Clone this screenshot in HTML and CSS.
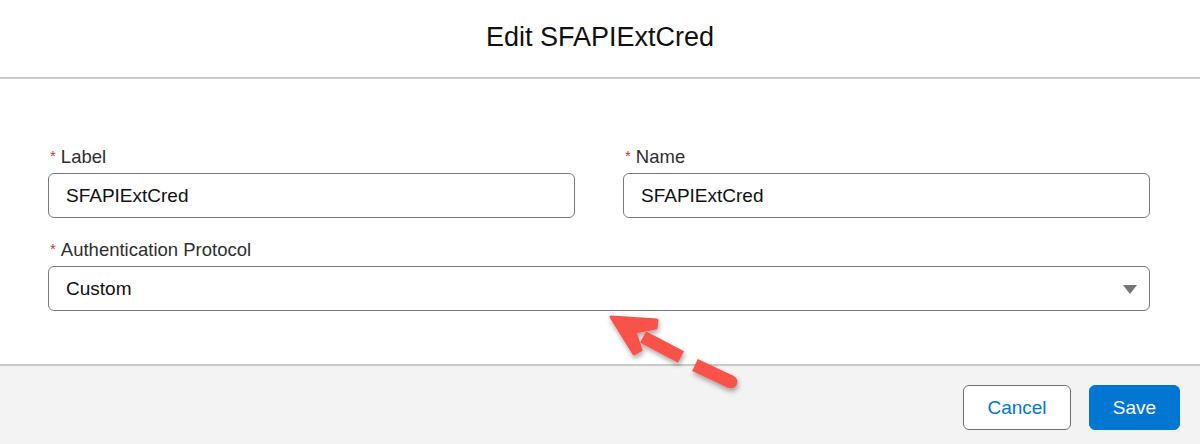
FILE: index.html
```html
<!DOCTYPE html>
<html lang="en">
<head>
<meta charset="utf-8">
<title>Edit SFAPIExtCred</title>
<link rel="stylesheet" href="styles.css">
</head>
<body>
<div class="modal">
  <header class="modal-header">
    <h2 class="modal-title">Edit SFAPIExtCred</h2>
  </header>
  <div class="modal-body">
    <div class="row">
      <div class="field">
        <label class="field-label"><abbr class="required">*</abbr>Label</label>
        <div class="input">SFAPIExtCred</div>
      </div>
      <div class="field">
        <label class="field-label"><abbr class="required">*</abbr>Name</label>
        <div class="input">SFAPIExtCred</div>
      </div>
    </div>
    <div class="field field-full">
      <label class="field-label"><abbr class="required">*</abbr>Authentication Protocol</label>
      <div class="input select">
        <span>Custom</span>
        <span class="caret"></span>
      </div>
    </div>
  </div>
  <footer class="modal-footer">
    <button class="btn btn-neutral">Cancel</button>
    <button class="btn btn-brand">Save</button>
  </footer>
  <svg class="annotation" width="1200" height="444" viewBox="0 0 1200 444">
    <defs>
      <filter id="shadow" x="-20%" y="-20%" width="140%" height="140%">
        <feDropShadow dx="1" dy="3" stdDeviation="2.5" flood-color="#000" flood-opacity="0.35"/>
      </filter>
    </defs>
    <g filter="url(#shadow)" fill="#f9534a" stroke="#f9534a">
      <polygon points="611,317 657,320 656,328 635,332 641,350 634,354" stroke-width="3" stroke-linejoin="round"/>
      <line x1="643" y1="337" x2="681" y2="357" stroke-width="13" stroke-linecap="butt"/>
      <line x1="695" y1="365" x2="731" y2="382" stroke-width="13" stroke-linecap="butt"/>
      <circle cx="731" cy="382" r="6.5" stroke="none"/>
    </g>
  </svg>
</div>
</body>
</html>
```

FILE: styles.css
```css
* {
  box-sizing: border-box;
}

html, body {
  margin: 0;
  padding: 0;
  height: 444px;
  overflow: hidden;
  background: #ffffff;
  font-family: "Liberation Sans", Arial, sans-serif;
  color: #181818;
}

.modal {
  position: relative;
  width: 1200px;
  height: 444px;
  display: flex;
  flex-direction: column;
}

.modal-header {
  height: 79px;
  border-bottom: 2px solid #c9c9c9;
  display: flex;
  align-items: center;
  justify-content: center;
  padding-bottom: 2px;
}

.modal-title {
  margin: 0;
  font-size: 27px;
  line-height: 31px;
  font-weight: 400;
  color: #101010;
}

.modal-body {
  height: 285px;
  padding: 67px 50px 0 48px;
  display: flex;
  flex-direction: column;
  gap: 21px;
}

.row {
  display: grid;
  grid-template-columns: 1fr 1fr;
  column-gap: 48px;
}

.field {
  display: flex;
  flex-direction: column;
}

.field-label {
  font-size: 18.5px;
  line-height: 22px;
  height: 22px;
  margin-bottom: 5px;
  padding-left: 2px;
  color: #2e2e2e;
}

.required {
  text-decoration: none;
  color: #c23934;
  font-size: 15px;
  line-height: 0;
  margin-right: 5px;
  vertical-align: 2px;
}

.input {
  height: 45px;
  border: 1px solid #7a7a7a;
  border-radius: 6px;
  padding: 0 17px;
  display: flex;
  align-items: center;
  font-size: 19px;
  color: #101010;
  background: #fff;
}

.select {
  justify-content: space-between;
  padding-right: 12px;
}

.caret {
  width: 0;
  height: 0;
  border-left: 7px solid transparent;
  border-right: 7px solid transparent;
  border-top: 9px solid #747474;
  margin-top: 2px;
}

.modal-footer {
  flex: 1;
  border-top: 2px solid #c9c9c9;
  background: #f3f3f3;
  padding: 19px 20px 0 0;
  display: flex;
  justify-content: flex-end;
  align-items: flex-start;
  gap: 18px;
}

.btn {
  height: 45px;
  border-radius: 6px;
  font-family: "Liberation Sans", Arial, sans-serif;
  font-size: 19px;
  padding: 0;
  cursor: pointer;
}

.btn-neutral {
  width: 108px;
  background: #ffffff;
  border: 1px solid #6f6f6f;
  color: #0176d3;
}

.btn-brand {
  width: 91px;
  background: #0176d3;
  border: 1px solid #0176d3;
  color: #ffffff;
}

.annotation {
  position: absolute;
  left: 0;
  top: 0;
  pointer-events: none;
}
```
